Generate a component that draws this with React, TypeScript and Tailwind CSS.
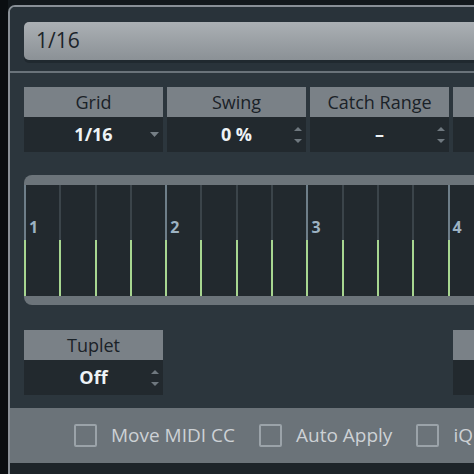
import React from "react";

const font = { fontFamily: '"Open Sans", "Liberation Sans", sans-serif' };

const Spin = () => (
  <div className="absolute right-[4px] top-0 h-full flex flex-col justify-center gap-[8px]">
    <svg width="8" height="4" viewBox="0 0 8 4">
      <path d="M0 4 L4 0 L8 4 Z" fill="#6f787f" />
    </svg>
    <svg width="8" height="4" viewBox="0 0 8 4">
      <path d="M0 0 L4 4 L8 0 Z" fill="#6f787f" />
    </svg>
  </div>
);

const Drop = () => (
  <div className="absolute right-[4px] top-0 h-full flex items-center">
    <svg width="9" height="5" viewBox="0 0 9 5">
      <path d="M0 0 L4.5 5 L9 0 Z" fill="#767f86" />
    </svg>
  </div>
);

type FieldProps = { label: string; value?: string; kind?: "drop" | "spin"; empty?: boolean };

const Field = ({ label, value, kind, empty }: FieldProps) => (
  <div className="w-[139px] shrink-0 flex flex-col">
    <div className="h-[30px] bg-[#7a8187] flex items-center justify-center text-[18px] text-[#1a2228]">
      {label}
    </div>
    <div className="relative h-[35px] bg-[#22292e] flex items-center justify-center text-[18px] font-bold text-[#eef3f6]">
      {!empty && value}
      {kind === "drop" && <Drop />}
      {kind === "spin" && <Spin />}
    </div>
  </div>
);

const ticks = Array.from({ length: 16 }, (_, i) => i);

const Ruler = () => (
  <div className="ml-[14px] mt-[23px] rounded-l-[8px] bg-[#6c747a] pt-[10px] pb-[9px]">
    <div className="h-[111px] bg-[#22292e] flex">
      {ticks.map((i) => {
        const beat = i % 4 === 0;
        return (
          <div key={i} className="w-[35.3px] shrink-0 flex flex-col">
            <div
              className={
                beat
                  ? "h-[55px] border-l-2 border-[#6e7e89] flex items-end pl-[3px] pb-[5px]"
                  : "h-[55px] border-l-2 border-[#3b444a]"
              }
            >
              {beat && (
                <span className="text-[16px] font-bold leading-none text-[#9db2c2]">{i / 4 + 1}</span>
              )}
            </div>
            <div className="h-[56px] border-l-2 border-[#a7d690]" />
          </div>
        );
      })}
    </div>
  </div>
);

const Check = ({ label }: { label: string }) => (
  <div className="flex items-center gap-[14px]">
    <div className="w-[23px] h-[23px] rounded-[2px] border-2 border-[#9ba3a9]" />
    <span className="text-[19px] text-[#cdd1d5]">{label}</span>
  </div>
);

export default function App() {
  return (
    <div className="w-[474px] h-[474px] overflow-hidden bg-[#13191d] flex" style={font}>
      <div className="w-[8px] shrink-0 bg-[#0a0e11]" />
      <div className="flex flex-col pt-[5px] shrink-0">
        <div className="w-[560px] flex-1 flex flex-col border-l-2 border-t-2 border-[#899097] rounded-tl-[7px] bg-[#2c363d] overflow-hidden">
          <div className="pl-[14px] pt-[15px] pb-[11px] bg-[#29333a] border-b-2 border-[#6a737a]">
            <div className="h-[38px] rounded-l-[5px] bg-gradient-to-b from-[#abb0b4] to-[#8b9196] flex items-center pl-[12px] text-[21px] text-[#1c242a] shadow-[0_3px_0_#20292f]">
              1/16
            </div>
          </div>
          <div className="pl-[14px] pt-[14px] flex gap-[4px]">
            <Field label="Grid" value="1/16" kind="drop" />
            <Field label="Swing" value="0 %" kind="spin" />
            <Field label="Catch Range" value="–" kind="spin" />
            <Field label="" empty />
          </div>
          <Ruler />
          <div className="pl-[14px] mt-[25px] flex gap-[4px]">
            <Field label="Tuplet" value="Off" kind="spin" />
            <div className="w-[139px] shrink-0" />
            <div className="w-[139px] shrink-0" />
            <Field label="" empty />
          </div>
          <div className="mt-[13px] h-[55px] bg-[#6b7379] flex items-center pl-[64px] gap-[24px]">
            <Check label="Move MIDI CC" />
            <Check label="Auto Apply" />
            <Check label="iQ" />
          </div>
          <div className="flex-1 bg-[#1d2429]" />
        </div>
      </div>
    </div>
  );
}
